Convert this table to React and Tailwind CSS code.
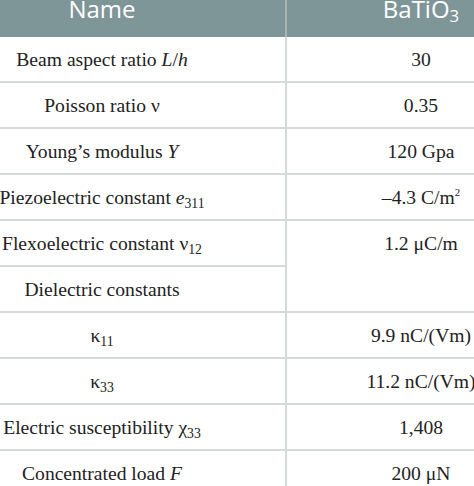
import React from 'react';

const Sub = ({ children }) => <sub className="text-[0.7em]">{children}</sub>;

const rows = [
  { name: <>Beam aspect ratio <i>L</i>/<i>h</i></>, value: '30' },
  { name: <>Poisson ratio ν</>, value: '0.35' },
  { name: <>Young’s modulus <i>Y</i></>, value: '120 Gpa' },
  { name: <>Piezoelectric constant <i>e</i><Sub>311</Sub></>, value: <>–4.3 C/m<sup className="text-[0.55em] top-[-0.75em]">2</sup></> },
  { name: <>Flexoelectric constant ν<Sub>12</Sub></>, value: '1.2 μC/m', open: true },
  { name: <>Dielectric constants</>, value: '' },
  { name: <>κ<Sub>11</Sub></>, value: '9.9 nC/(Vm)' },
  { name: <>κ<Sub>33</Sub></>, value: '11.2 nC/(Vm)' },
  { name: <>Electric susceptibility χ<Sub>33</Sub></>, value: '1,408' },
  { name: <>Concentrated load <i>F</i></>, value: '200 μN' },
];

const App = () => {
  return (
    <div className="w-[474px] h-[486px] overflow-hidden bg-white">
      <div className="w-[636px] ml-[-81px] mt-[-19px]">
        <div className="flex h-[56px] bg-[#7f9699] text-white text-[24px] font-['Open_Sans',sans-serif]">
          <div className="w-[368px] border-r-2 border-[#a7b5b7] flex items-center justify-center">Name</div>
          <div className="flex-1 flex items-center justify-center">
            <span>BaTiO<sub className="text-[0.7em]">3</sub></span>
          </div>
        </div>
        <div className="font-['Liberation_Serif',serif] text-[19.6px] text-[#222]">
          {rows.map((row, i) => (
            <div key={i} className="flex h-[46px]">
              <div className="w-[368px] pt-[2px] border-r-2 border-b-2 border-[#d4d9d9] flex items-center justify-center whitespace-nowrap">
                <span>{row.name}</span>
              </div>
              <div className={`flex-1 pt-[2px] flex items-center justify-center whitespace-nowrap border-b-2 ${row.open ? 'border-transparent' : 'border-[#d4d9d9]'}`}>
                <span>{row.value}</span>
              </div>
            </div>
          ))}
        </div>
      </div>
    </div>
  );
};

export default App;
